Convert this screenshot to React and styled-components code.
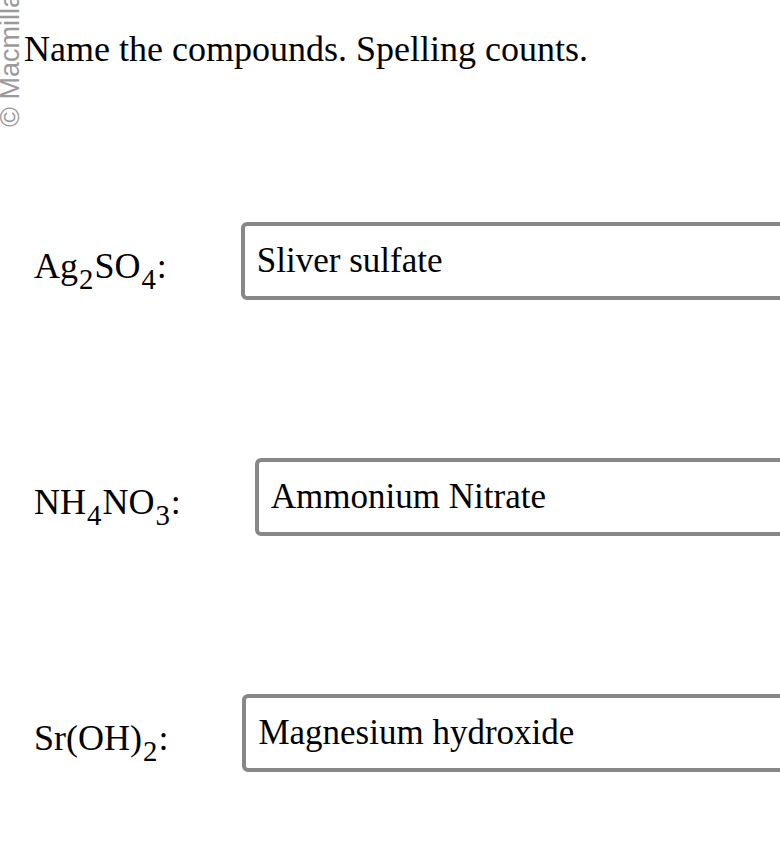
import styled, { createGlobalStyle } from "styled-components";

const GlobalStyle = createGlobalStyle`
    html, body {
        margin: 0;
        padding: 0;
        background: #ffffff;
    }

    body {
        font-family: "Liberation Serif", "Times New Roman", serif;
        color: #000000;
    }
`;

const compounds = [
    { formula: [["Ag"], ["2", true], ["SO"], ["4", true]], answer: "Sliver sulfate" },
    { formula: [["NH"], ["4", true], ["NO"], ["3", true]], answer: "Ammonium Nitrate" },
    { formula: [["Sr(OH)"], ["2", true]], answer: "Magnesium hydroxide" }
];

export default function App() {
    return (
        <Page>
            <GlobalStyle />
            <Watermark>© Macmillan</Watermark>
            <Title>Name the compounds. Spelling counts.</Title>
            <List>
                {compounds.map((item, i) => (
                    <Row key={i}>
                        <Formula>
                            {item.formula.map(([text, isSub], j) =>
                                isSub ? <sub key={j}>{text}</sub> : <span key={j}>{text}</span>
                            )}
                            :
                        </Formula>
                        <AnswerInput type="text" defaultValue={item.answer} readOnly />
                    </Row>
                ))}
            </List>
        </Page>
    );
}

const Page = styled.div`
    position: relative;
    width: 780px;
    height: 846px;
    overflow: hidden;
    padding: 29px 0 0 24px;
    box-sizing: border-box;
`;

const Watermark = styled.span`
    position: absolute;
    left: -5px;
    top: 127px;
    transform-origin: left top;
    transform: rotate(-90deg);
    font-family: "Liberation Sans", Arial, sans-serif;
    font-size: 27px;
    line-height: 31px;
    color: #9a9a9a;
    white-space: nowrap;
`;

const Title = styled.h1`
    margin: 0;
    font-size: 36px;
    font-weight: normal;
    line-height: 40px;
`;

const List = styled.div`
    display: flex;
    flex-direction: column;
    gap: 158px;
    margin: 153px 0 0 10px;
`;

const Row = styled.div`
    display: flex;
    align-items: flex-start;
    gap: 74px;
`;

const Formula = styled.div`
    padding-top: 24px;
    font-size: 36px;
    line-height: 40px;
    white-space: nowrap;

    sub {
        font-size: 0.8em;
        line-height: 0;
        vertical-align: -0.38em;
        padding: 0 1px;
    }
`;

const AnswerInput = styled.input`
    box-sizing: border-box;
    width: 600px;
    height: 78px;
    flex-shrink: 0;
    padding: 0 12px;
    border: 4px solid #878787;
    border-radius: 6px;
    background: #ffffff;
    font-family: "Liberation Serif", "Times New Roman", serif;
    font-size: 35px;
    color: #000000;
    outline: none;
`;
